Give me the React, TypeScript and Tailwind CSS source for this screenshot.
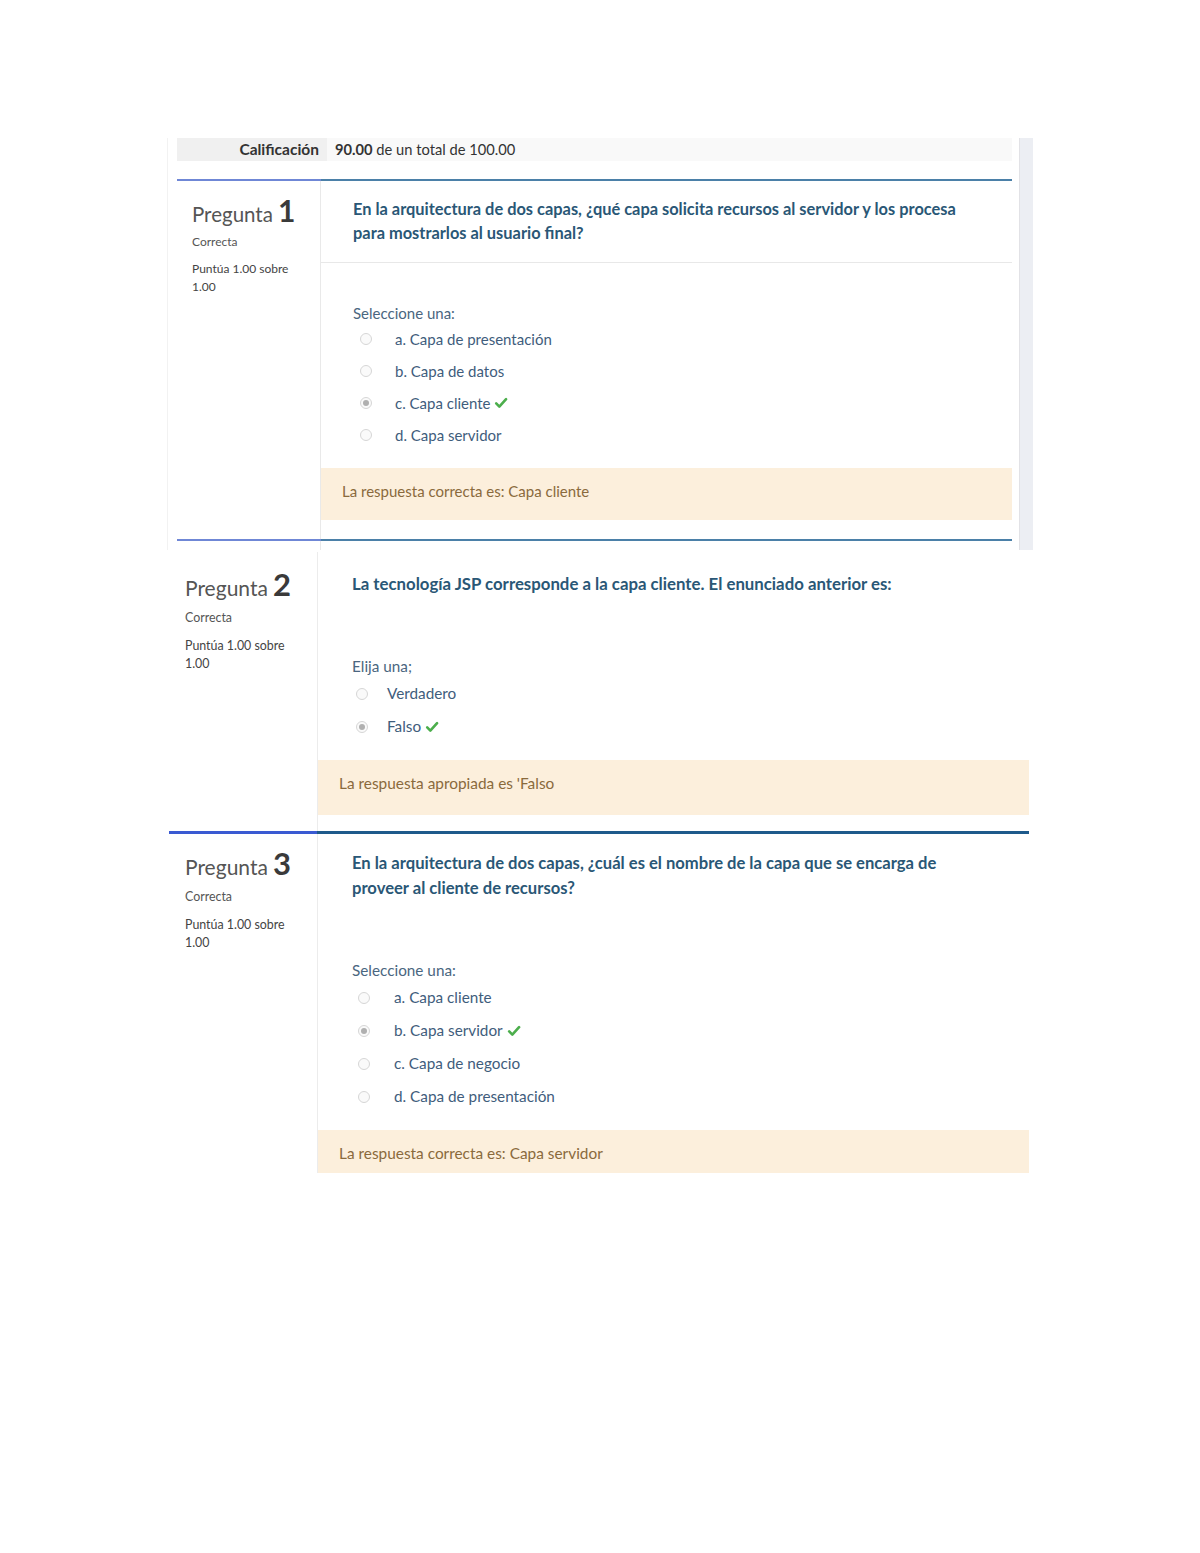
import React from "react";

type Opt = { label: string; checked?: boolean };

const Radio = ({ checked }: { checked?: boolean }) => (
  <span className="flex h-[12px] w-[12px] items-center justify-center rounded-full border border-[#d6d6d6] bg-[#fafafa]">
    {checked && <span className="h-[6px] w-[6px] rounded-full bg-[#b0b0b0]" />}
  </span>
);

const Check = () => (
  <svg viewBox="0 0 16 16" className="ml-[4px] h-[14px] w-[14px]">
    <path
      d="M2.5 8.5l3.6 3.6L13.8 3.6"
      stroke="#4cae4c"
      strokeWidth="3"
      fill="none"
      strokeLinecap="round"
      strokeLinejoin="round"
    />
  </svg>
);

const Options = ({
  items,
  radioPad,
  gap,
  rowH,
  size,
}: {
  items: Opt[];
  radioPad: string;
  gap: string;
  rowH: string;
  size: string;
}) => (
  <div>
    {items.map((o) => (
      <div key={o.label} className={`flex items-center ${rowH}`}>
        <span className={radioPad}>
          <Radio checked={o.checked} />
        </span>
        <span className={`${gap} ${size} text-[#3f5d7c]`}>{o.label}</span>
        {o.checked && <Check />}
      </div>
    ))}
  </div>
);

const Info = ({
  n,
  pt,
  mt1,
  mt2,
  size,
  numSize,
  small,
}: {
  n: number;
  pt: string;
  mt1: string;
  mt2: string;
  size: string;
  numSize: string;
  small: string;
}) => (
  <div className={pt}>
    <div className="flex items-baseline leading-[32px]">
      <span className={`${size} text-[#555555]`}>Pregunta</span>
      <span className={`ml-[5px] ${numSize} font-bold text-[#3a3a3a]`}>{n}</span>
    </div>
    <div className={`${mt1} ${small} leading-[16px] text-[#555]`}>Correcta</div>
    <div className={`${mt2} ${small} leading-[18px] text-[#444]`}>
      Puntúa 1.00 sobre
      <br />
      1.00
    </div>
  </div>
);

const Feedback = ({ text, cls }: { text: string; cls: string }) => (
  <div className={`bg-[#fcefdc] pl-[21px] leading-[20px] text-[#8a6a3c] ${cls}`}>{text}</div>
);

export default function App() {
  return (
    <div className="min-h-[1553px] bg-white pt-[138px] [font-family:Lato,'Noto_Sans',sans-serif]">
      {/* first pasted capture */}
      <div className="ml-[167px] flex h-[412px] w-[866px]">
        <div className="w-[852px] border-l border-[#f2f2f2] pl-[9px] pr-[7px]">
          <div className="flex h-[23px] leading-[23px] text-[#333]">
            <div className="w-[150px] bg-[#f0f0f0] pr-[8px] text-right text-[15.5px] font-bold">Calificación</div>
            <div className="flex-1 bg-[#f9f9f9] pl-[8px] text-[14.7px]">
              <span className="font-bold">90.00</span> de un total de 100.00
            </div>
          </div>
          <div className="mt-[18px] flex h-[2px]">
            <div className="w-[144px] bg-[#6f87d6]" />
            <div className="flex-1 bg-[#4b80a8]" />
          </div>
          <div className="flex h-[358px]">
            <div className="w-[143px] pl-[15px]">
              <Info
                n={1}
                pt="pt-[13px]"
                mt1="mt-[4px]"
                mt2="mt-[10px]"
                size="text-[20.5px]"
                numSize="text-[30px]"
                small="text-[12px]"
              />
            </div>
            <div className="flex-1 border-l border-[#e9e9e9]">
              <div className="border-b border-[#e8e8e8] pb-[17px] pl-[32px] pt-[16px]">
                <div className="w-[618px] text-[16.4px] font-bold leading-[24px] text-[#2a5776]">
                  En la arquitectura de dos capas, ¿qué capa solicita recursos al servidor y los procesa para mostrarlos al usuario final?
                </div>
              </div>
              <div className="pl-[32px] pt-[40px]">
                <div className="text-[15px] leading-[20px] text-[#4a6680]">Seleccione una:</div>
                <Options
                  rowH="h-[32px]"
                  radioPad="pl-[7px]"
                  gap="ml-[23px]"
                  size="text-[15px]"
                  items={[
                    { label: "a. Capa de presentación" },
                    { label: "b. Capa de datos" },
                    { label: "c. Capa cliente", checked: true },
                    { label: "d. Capa servidor" },
                  ]}
                />
              </div>
              <Feedback cls="mt-[17px] h-[52px] pt-[13px] text-[15px]" text="La respuesta correcta es: Capa cliente" />
            </div>
          </div>
          <div className="flex h-[2px]">
            <div className="w-[144px] bg-[#6f87d6]" />
            <div className="flex-1 bg-[#4b80a8]" />
          </div>
          <div className="flex h-[9px]">
            <div className="w-[143px]" />
            <div className="flex-1 border-l border-[#e9e9e9]" />
          </div>
        </div>
        <div className="w-[14px] border-l border-[#e2e2e6] bg-[#eceef3]" />
      </div>

      {/* second pasted capture */}
      <div className="ml-[169px] mt-[2px] w-[860px]">
        <div className="flex h-[279px]">
          <div className="w-[148px] pl-[16px]">
            <Info
              n={2}
              pt="pt-[16px]"
              mt1="mt-[6px]"
              mt2="mt-[11px]"
              size="text-[21px]"
              numSize="text-[31px]"
              small="text-[12.4px]"
            />
          </div>
          <div className="flex-1 border-l border-[#ececec]">
            <div className="pl-[34px] pt-[20px] text-[16.8px] font-bold leading-[24px] text-[#2a5776]">
              La tecnología JSP corresponde a la capa cliente. El enunciado anterior es:
            </div>
            <div className="mt-[60px] pl-[34px]">
              <div className="text-[15.3px] leading-[20px] text-[#4a6680]">Elija una;</div>
              <div className="mt-[1px]">
                <Options
                  rowH="h-[33px]"
                  radioPad="pl-[4px]"
                  gap="ml-[19px]"
                  size="text-[15.3px]"
                  items={[{ label: "Verdadero" }, { label: "Falso", checked: true }]}
                />
              </div>
            </div>
            <Feedback cls="mt-[17px] h-[55px] pt-[13px] text-[15.4px]" text="La respuesta apropiada es 'Falso" />
          </div>
        </div>
        <div className="flex h-[3px]">
          <div className="w-[148px] bg-[#3a5ad2]" />
          <div className="flex-1 bg-[#1e5a8b]" />
        </div>
        <div className="flex h-[339px]">
          <div className="w-[148px] pl-[16px]">
            <Info
              n={3}
              pt="pt-[13px]"
              mt1="mt-[6px]"
              mt2="mt-[11px]"
              size="text-[21px]"
              numSize="text-[31px]"
              small="text-[12.4px]"
            />
          </div>
          <div className="flex-1 border-l border-[#ececec]">
            <div className="pl-[34px] pt-[17px]">
              <div className="w-[630px] text-[16.6px] font-bold leading-[25px] text-[#2a5776]">
                En la arquitectura de dos capas, ¿cuál es el nombre de la capa que se encarga de proveer al cliente de recursos?
              </div>
            </div>
            <div className="mt-[59px] pl-[34px]">
              <div className="text-[15.3px] leading-[20px] text-[#4a6680]">Seleccione una:</div>
              <div className="mt-[1px]">
                <Options
                  rowH="h-[33px]"
                  radioPad="pl-[6px]"
                  gap="ml-[24px]"
                  size="text-[15.3px]"
                  items={[
                    { label: "a. Capa cliente" },
                    { label: "b. Capa servidor", checked: true },
                    { label: "c. Capa de negocio" },
                    { label: "d. Capa de presentación" },
                  ]}
                />
              </div>
            </div>
            <Feedback cls="mt-[17px] h-[43px] pt-[13px] text-[15.4px]" text="La respuesta correcta es: Capa servidor" />
          </div>
        </div>
      </div>
    </div>
  );
}
